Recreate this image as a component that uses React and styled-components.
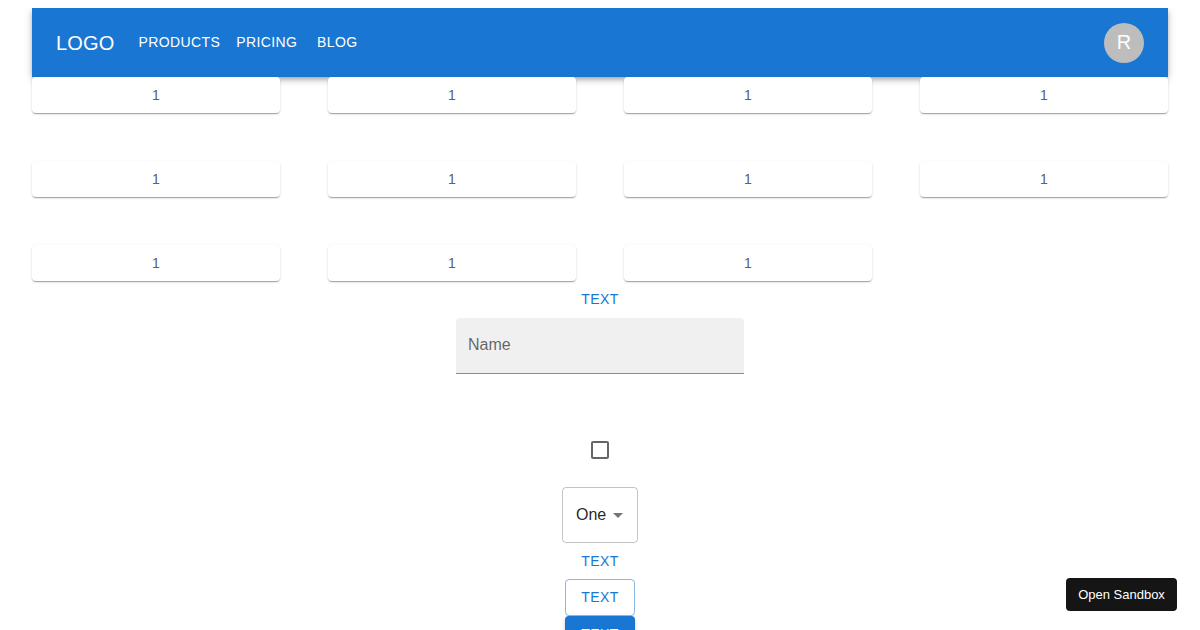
import React from "react";
import styled, { createGlobalStyle } from "styled-components";

const Global = createGlobalStyle`
  body {
    margin: 8px;
    font-family: "Liberation Sans", Arial, Helvetica, sans-serif;
    background: #fff;
  }
  * { box-sizing: border-box; }
`;

const Container = styled.div`
  padding: 0 24px;
`;

const Bar = styled.header`
  background: #1976d2;
  color: #fff;
  box-shadow: 0px 2px 4px -1px rgba(0,0,0,0.2), 0px 4px 5px 0px rgba(0,0,0,0.14), 0px 1px 10px 0px rgba(0,0,0,0.12);
  display: flex;
  align-items: center;
  padding: 0 24px;
  min-height: 69px;
`;

const Logo = styled.div`
  font-size: 20px;
  font-weight: 500;
  letter-spacing: 0.0075em;
  line-height: 1.6;
  margin-right: 16px;
`;

const Nav = styled.nav`
  display: flex;
  flex: 1;
`;

const NavButton = styled.button`
  background: none;
  border: 0;
  color: #fff;
  font-family: inherit;
  font-size: 14px;
  font-weight: 500;
  letter-spacing: 0.4px;
  text-transform: uppercase;
  padding: 6px 8px;
  min-width: 64px;
  line-height: 1.75;
  margin: 16px 0;
  cursor: pointer;
`;

const Avatar = styled.div`
  width: 40px;
  height: 40px;
  border-radius: 50%;
  background: #bdbdbd;
  color: #fff;
  font-size: 20px;
  display: flex;
  align-items: center;
  justify-content: center;
`;

const Grid = styled.div`
  display: grid;
  grid-template-columns: repeat(4, 1fr);
  column-gap: 48px;
  row-gap: 48px;
`;

const Item = styled.div`
  background: #fff;
  border-radius: 4px;
  box-shadow: 0px 2px 1px -1px rgba(0,0,0,0.2), 0px 1px 1px 0px rgba(0,0,0,0.14), 0px 1px 3px 0px rgba(0,0,0,0.12);
  padding: 8px;
  text-align: center;
  font-size: 14px;
  line-height: 20px;
  letter-spacing: 0.15px;
  color: #57607a;
`;

const Column = styled.div`
  display: flex;
  flex-direction: column;
  align-items: center;
`;

const Button = styled.button`
  font-family: inherit;
  font-size: 14px;
  font-weight: 500;
  letter-spacing: 0.4px;
  text-transform: uppercase;
  line-height: 1.75;
  border-radius: 4px;
  min-width: 64px;
  cursor: pointer;
  color: ${p => (p.$variant === "contained" ? "#fff" : "#1976d2")};
  background: ${p => (p.$variant === "contained" ? "#1976d2" : "transparent")};
  border: ${p => (p.$variant === "outlined" ? "1px solid rgba(25,118,210,0.5)" : "0")};
  padding: ${p => (p.$variant === "outlined" ? "5px 15px" : p.$variant === "contained" ? "6px 16px" : "6px 8px")};
  width: ${p => (p.$variant === "contained" ? "70px" : "auto")};
  box-shadow: ${p => (p.$variant === "contained" ? "0px 3px 1px -2px rgba(0,0,0,0.2), 0px 2px 2px 0px rgba(0,0,0,0.14), 0px 1px 5px 0px rgba(0,0,0,0.12)" : "none")};
`;

const Filled = styled.div`
  width: 288px;
  height: 56px;
  background: rgba(0,0,0,0.06);
  border-radius: 4px 4px 0 0;
  border-bottom: 1px solid rgba(0,0,0,0.42);
  display: flex;
  align-items: center;
  padding: 0 12px;
  font-size: 16px;
  color: rgba(0,0,0,0.6);
`;

const CheckWrap = styled.span`
  display: inline-flex;
  padding: 9px;
  margin-top: 55px;
  color: rgba(0,0,0,0.6);
`;

const Select = styled.div`
  margin-top: 16px;
  position: relative;
  border: 1px solid rgba(0,0,0,0.23);
  border-radius: 4px;
  height: 56px;
  width: 76px;
  padding: 0 0 0 13px;
  display: flex;
  align-items: center;
  font-size: 16px;
  color: rgba(0,0,0,0.87);
  & > svg {
    position: absolute;
    right: 7px;
    top: 15px;
  }
`;

const Sandbox = styled.button`
  position: fixed;
  right: 23px;
  bottom: 19px;
  background: #151515;
  color: #fff;
  border: 0;
  border-radius: 4px;
  font-family: inherit;
  font-size: 13px;
  padding: 0 12px;
  height: 33px;
  width: 111px;
`;

export default function App() {
  const items = Array.from({ length: 11 });
  return (
    <>
      <Global />
      <Container>
        <Bar>
          <Logo>LOGO</Logo>
          <Nav>
            <NavButton>Products</NavButton>
            <NavButton>Pricing</NavButton>
            <NavButton>Blog</NavButton>
          </Nav>
          <Avatar>R</Avatar>
        </Bar>
        <Grid>
          {items.map((_, i) => (
            <Item key={i}>1</Item>
          ))}
        </Grid>
        <Column>
          <Button>Text</Button>
          <Filled>Name</Filled>
          <CheckWrap>
            <svg width="24" height="24" viewBox="0 0 24 24">
              <path fill="currentColor" d="M19 5v14H5V5h14m0-2H5c-1.1 0-2 .9-2 2v14c0 1.1.9 2 2 2h14c1.1 0 2-.9 2-2V5c0-1.1-.9-2-2-2z" />
            </svg>
          </CheckWrap>
          <Select>
            One
            <svg width="24" height="24" viewBox="0 0 24 24">
              <path fill="rgba(0,0,0,0.54)" d="M7 10l5 5 5-5z" />
            </svg>
          </Select>
          <Button>Text</Button>
          <Button $variant="outlined">Text</Button>
          <Button $variant="contained">Text</Button>
        </Column>
      </Container>
      <Sandbox>Open Sandbox</Sandbox>
    </>
  );
}
